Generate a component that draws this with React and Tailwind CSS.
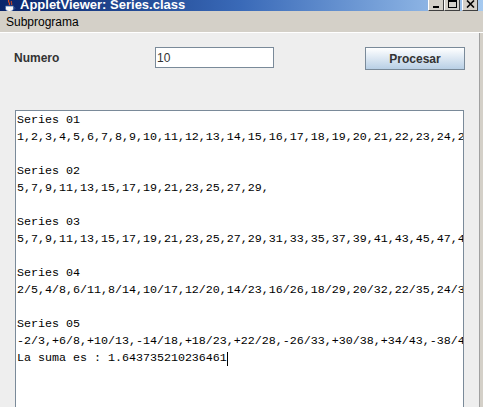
import { useState } from "react";

const lines = [
  "Series 01",
  "1,2,3,4,5,6,7,8,9,10,11,12,13,14,15,16,17,18,19,20,21,22,23,24,25,26,27,28,29,30,",
  "",
  "Series 02",
  "5,7,9,11,13,15,17,19,21,23,25,27,29,",
  "",
  "Series 03",
  "5,7,9,11,13,15,17,19,21,23,25,27,29,31,33,35,37,39,41,43,45,47,49,51,53,",
  "",
  "Series 04",
  "2/5,4/8,6/11,8/14,10/17,12/20,14/23,16/26,18/29,20/32,22/35,24/38,26/41,",
  "",
  "Series 05",
  "-2/3,+6/8,+10/13,-14/18,+18/23,+22/28,-26/33,+30/38,+34/43,-38/48,",
];

const JavaIcon = () => (
  <svg width="14" height="14" viewBox="0 0 14 14">
    <path d="M6 1 C4 3 8 4 6 6" stroke="#e05020" strokeWidth="1.2" fill="none" />
    <path d="M8.5 2 C7 3.5 10 4.5 8.5 6" stroke="#e05020" strokeWidth="1" fill="none" />
    <path d="M2.5 7 H10.5 V9.5 C10.5 11.5 8.5 12.5 6.5 12.5 C4.5 12.5 2.5 11.5 2.5 9.5 Z" fill="#f8f8f8" stroke="#4060a0" strokeWidth="0.8" />
    <path d="M10.5 8 C12.5 8 12.5 10.5 10.3 10.5" stroke="#4060a0" strokeWidth="0.8" fill="none" />
    <path d="M1.5 13 H11.5" stroke="#4060a0" strokeWidth="0.8" />
  </svg>
);

const WinButton = ({ children }) => (
  <div className="w-[16px] h-[14px] bg-[#d4d0c8] border border-t-white border-l-white border-r-[#404040] border-b-[#404040] flex items-center justify-center text-black">
    {children}
  </div>
);

export default function App() {
  const [numero, setNumero] = useState("10");

  return (
    <div className="w-[483px] h-[407px] overflow-hidden flex flex-col bg-[#d4d0c8] font-['Liberation_Sans',Arial,sans-serif]">
      {/* title bar, top is cropped */}
      <div className="h-[11px] shrink-0 flex items-end overflow-hidden bg-gradient-to-r from-[#0a246a] via-[#3a6ab8] to-[#a6caf0]">
        <div className="ml-[3px] mb-[-2px]">
          <JavaIcon />
        </div>
        <span className="ml-[3px] text-white font-bold text-[13px] leading-[13px]">AppletViewer: Series.class</span>
        <div className="ml-auto mr-[5px] flex items-end">
          <WinButton>
            <div className="w-[6px] h-[2px] bg-black mt-[5px]" />
          </WinButton>
          <WinButton>
            <div className="w-[9px] h-[8px] border border-black border-t-2" />
          </WinButton>
          <div className="ml-[2px]">
            <WinButton>
              <svg width="9" height="8" viewBox="0 0 9 8">
                <path d="M1 0.5 L8 7.5 M8 0.5 L1 7.5" stroke="black" strokeWidth="1.6" />
              </svg>
            </WinButton>
          </div>
        </div>
      </div>

      {/* menu bar */}
      <div className="h-[21px] shrink-0 flex items-center px-[6px] pt-[1px] bg-[#d4d0c8] text-[12px] text-black">
        Subprograma
      </div>

      {/* applet area */}
      <div className="flex-1 flex border-t border-white">
        <div className="flex-1 bg-[#eeeeee] flex flex-col">
          <div className="mt-[14px] flex items-start">
            <div className="w-[155px] pl-[14px] h-[22px] flex items-center text-[12px] font-bold text-[#333333]">
              Numero
            </div>
            <input
              value={numero}
              onChange={(e) => setNumero(e.target.value)}
              className="w-[119px] h-[21px] border border-[#7a8a99] bg-white px-[1px] text-[12px] text-[#333333] outline-none"
            />
            <button className="ml-[91px] w-[100px] h-[23px] border border-[#7a8a99] bg-gradient-to-b from-white to-[#b8cfe5] text-[12px] font-bold text-[#333333]">
              Procesar
            </button>
          </div>

          <div className="mt-[40px] ml-[15px] w-[449px] flex-1 border border-[#7a8a99] border-b-0 bg-white overflow-hidden font-['Liberation_Mono','Courier_New',monospace] text-[11.67px] leading-[17px] text-black">
            <div className="pl-[1px] pt-[1px]">
              {lines.map((l, i) => (
                <div key={i} className="h-[17px] whitespace-pre">
                  {l}
                </div>
              ))}
              <div className="h-[17px] whitespace-pre flex items-center">
                La suma es : 1.643735210236461
                <span className="w-px h-[14px] bg-black" />
              </div>
            </div>
          </div>
        </div>
        <div className="w-[4px] border-l border-[#a0a0a0] bg-[#d4d0c8]" />
      </div>
    </div>
  );
}
